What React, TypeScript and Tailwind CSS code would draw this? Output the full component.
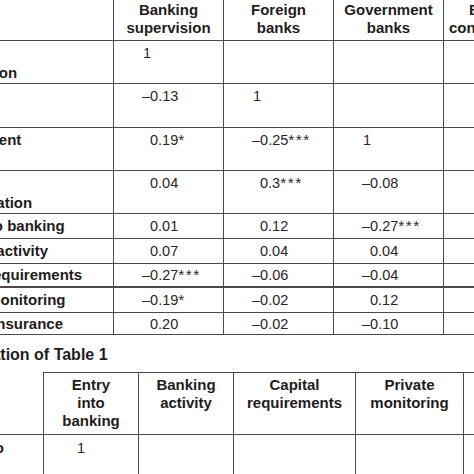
type Row = {
  label: string;
  vals: string[];
  h: string;
  tall?: boolean;
  thick?: boolean;
};

const rows: Row[] = [
  { label: "Banking supervision", vals: ["1", "", "", ""], h: "h-[43px]", tall: true },
  { label: "Foreign banks", vals: ["–0.13", "1", "", ""], h: "h-[44px]", tall: true },
  { label: "Government banks", vals: ["0.19*", "–0.25***", "1", ""], h: "h-[43px]", tall: true },
  { label: "Banking concentration", vals: ["0.04", "0.3***", "–0.08", ""], h: "h-[43px]", tall: true },
  { label: "Entry into banking", vals: ["0.01", "0.12", "–0.27***", ""], h: "h-[25px]" },
  { label: "Banking activity", vals: ["0.07", "0.04", "0.04", ""], h: "h-[25px]" },
  { label: "Capital requirements", vals: ["–0.27***", "–0.06", "–0.04", ""], h: "h-[24px]", thick: true },
  { label: "Private monitoring", vals: ["–0.19*", "–0.02", "0.12", ""], h: "h-[25px]" },
  { label: "Deposit insurance", vals: ["0.20", "–0.02", "–0.10", ""], h: "h-[22px]" },
];

const headers = ["Banking supervision", "Foreign banks", "Government banks", "Banking concentration"];
const headers2 = ["Entry into banking", "Banking activity", "Capital requirements", "Private monitoring", "Deposit insurance"];

// number with its significance stars a little spread out, like the print
function Num({ v }: { v: string }) {
  const m = v.match(/^([^*]*)(\**)$/);
  const num = m ? m[1] : v;
  const stars = m ? m[2] : "";
  return (
    <>
      {num}
      {stars && <span className="tracking-[1.5px] text-[15.5px]">{stars}</span>}
    </>
  );
}

// keeps the minus sign / the digit 1 hanging left of the decimal column
function Val({ v }: { v: string }) {
  if (!v) return null;
  if (v.startsWith("–"))
    return (
      <span className="-ml-[8px]">
        <Num v={v} />
      </span>
    );
  if (v === "1") return <span className="-ml-[7px]">{v}</span>;
  return <Num v={v} />;
}

function HeadText({ text }: { text: string }) {
  return (
    <>
      {text.split(" ").map((w) => (
        <div key={w}>{w}</div>
      ))}
    </>
  );
}

export default function App() {
  return (
    <main
      className="w-[474px] h-[474px] overflow-hidden bg-white text-[#1f1c1d]"
      style={{ fontFamily: '"Liberation Sans", Arial, sans-serif' }}
    >
      <div className="-ml-[72px] w-[700px]">
        {/* Correlation table */}
        <div className="grid grid-cols-[185px_110px_110px_110px_110px] h-[41px] text-[15px] font-bold leading-[18px]">
          <div className="border-b border-[#4a4a4a]" />
          {headers.map((h) => (
            <div key={h} className="border-b border-l border-[#4a4a4a] pt-[1px] text-center">
              <HeadText text={h} />
            </div>
          ))}
        </div>

        {rows.map((r) => (
          <div
            key={r.label}
            className={`grid grid-cols-[185px_110px_110px_110px_110px] ${r.h} leading-[20px]`}
          >
            <div
              className={`${r.thick ? "border-b-2" : "border-b"} border-[#4a4a4a] pl-[5px] pr-[8px] text-[15px] font-bold ${
                r.tall ? "pt-[2px] whitespace-pre-line" : "flex items-center"
              }`}
            >
              {r.tall ? r.label.replace(" ", "\n") : r.label}
            </div>
            {r.vals.map((v, i) => (
              <div
                key={i}
                className={`${r.thick ? "border-b-2" : "border-b"} border-l border-[#4a4a4a] pl-[36px] text-[14.5px] text-[#2a2627] ${
                  r.tall ? "pt-[2px]" : "flex items-center"
                }`}
              >
                <Val v={v} />
              </div>
            ))}
          </div>
        ))}

        {/* Continuation */}
        <div className="mt-[10px] pl-[3px] text-[16px] font-bold leading-[20px]">Continuation of Table 1</div>

        <div className="mt-[7px] grid grid-cols-[115px_95px_95px_122px_108px_110px] h-[63px] text-[15px] font-bold leading-[18px]">
          <div className="border-b border-[#4a4a4a]" />
          {headers2.map((h) => (
            <div key={h} className="border-t border-b border-l border-[#4a4a4a] pt-[3px] text-center">
              <HeadText text={h} />
            </div>
          ))}
        </div>
        <div className="grid grid-cols-[115px_95px_95px_122px_108px_110px] h-[44px] leading-[20px]">
          <div className="border-b border-[#4a4a4a] pl-[6px] pr-[8px] pt-[3px] text-[15px] font-bold">Entry into banking</div>
          {["1", "", "", "", ""].map((v, i) => (
            <div key={i} className="border-b border-l border-[#4a4a4a] pl-[36px] pt-[3px] text-[14.5px] text-[#2a2627]">
              {v === "1" ? <span className="-ml-[3px]">1</span> : null}
            </div>
          ))}
        </div>
      </div>
    </main>
  );
}
